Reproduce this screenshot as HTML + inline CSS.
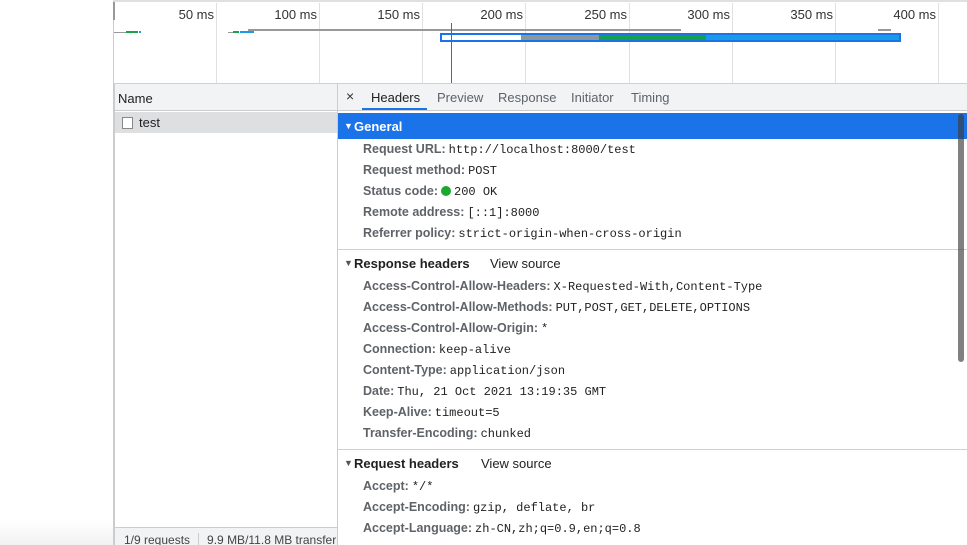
<!DOCTYPE html>
<html><head><style>
*{margin:0;padding:0;box-sizing:border-box}
body{width:967px;height:545px;overflow:hidden;background:#fff;font-family:"Liberation Sans",sans-serif;position:relative;color:#202124}
.a{position:absolute}
.gl{position:absolute;top:3px;height:80px;width:1px;background:#e0e0e0}
.tl{position:absolute;top:7px;font-size:13px;color:#333;text-align:right;width:80px}
.lab{position:absolute;left:363px;font-size:12.5px;color:#5f6368;font-weight:bold;white-space:nowrap}
.lab span{font-family:"Liberation Mono",monospace;font-weight:normal;color:#222;font-size:12px;margin-left:3px}
.sec{position:absolute;left:338px;width:629px;height:26px;font-size:13px;font-weight:bold;color:#202124}
.sec i{font-style:normal;font-size:9px;position:absolute;left:6px;top:8px;color:#555}
.sec b{position:absolute;left:16px;top:6px}
.sec u{text-decoration:none;font-weight:normal;position:absolute;top:6px;color:#202124}
.tab{position:absolute;top:90px;font-size:13px;color:#5f6368}
</style></head><body>
<div class="a" style="left:113px;top:0;width:854px;height:84px;border-top:2px solid #e0e0e0;border-left:1px solid #ccc;border-bottom:1px solid #d0d0d0"></div>
<div class="a" style="left:113px;top:2px;width:2px;height:18px;background:#999"></div>
<div class="gl" style="left:216px"></div><div class="gl" style="left:319px"></div><div class="gl" style="left:422px"></div><div class="gl" style="left:525px"></div><div class="gl" style="left:629px"></div><div class="gl" style="left:732px"></div><div class="gl" style="left:835px"></div><div class="gl" style="left:938px"></div>
<div class="tl" style="left:134px">50 ms</div><div class="tl" style="left:237px">100 ms</div><div class="tl" style="left:340px">150 ms</div><div class="tl" style="left:443px">200 ms</div><div class="tl" style="left:547px">250 ms</div><div class="tl" style="left:650px">300 ms</div><div class="tl" style="left:753px">350 ms</div><div class="tl" style="left:856px">400 ms</div>
<div class="a" style="left:114px;top:32px;width:12px;height:1px;background:#999"></div>
<div class="a" style="left:126px;top:31px;width:12px;height:2px;background:#1aa34a"></div>
<div class="a" style="left:139px;top:31px;width:2px;height:2px;background:#1a9be8"></div>
<div class="a" style="left:228px;top:32px;width:8px;height:1px;background:#999"></div>
<div class="a" style="left:233px;top:31px;width:6px;height:2px;background:#1aa34a"></div>
<div class="a" style="left:240px;top:31px;width:14px;height:2px;background:#1a9be8"></div>
<div class="a" style="left:248px;top:29px;width:433px;height:2px;background:#999"></div>
<div class="a" style="left:878px;top:29px;width:13px;height:2px;background:#999"></div>
<div class="a" style="left:440px;top:33px;width:461px;height:9px;background:#1a9be8;border:2px solid #1a73e8"></div>
<div class="a" style="left:442px;top:35px;width:79px;height:5px;background:#fff"></div>
<div class="a" style="left:521px;top:35px;width:78px;height:5px;background:#8a9a9a"></div>
<div class="a" style="left:599px;top:35px;width:107px;height:5px;background:#13a050"></div>
<div class="a" style="left:451px;top:23px;width:1px;height:60px;background:#1a73e8"></div>
<div class="a" style="left:113px;top:84px;width:225px;height:461px;border-left:2px solid #ccc;border-right:1px solid #ccc"></div>
<div class="a" style="left:115px;top:84px;width:222px;height:27px;background:#f1f3f4;border-bottom:1px solid #ccc;font-size:13px;padding:7px 0 0 3px">Name</div>
<div class="a" style="left:115px;top:112px;width:222px;height:21px;background:#dedfe0;font-size:13px;padding:3px 0 0 24px">test</div>
<div class="a" style="left:122px;top:117px;width:11px;height:12px;border:1px solid #888;background:#fff"></div>
<div class="a" style="left:115px;top:527px;width:222px;height:18px;background:#f1f3f4;border-top:1px solid #ccc;font-size:12px;color:#444;padding:5px 0 0 9px;white-space:nowrap;overflow:hidden">1/9 requests<span style="display:inline-block;width:1px;height:14px;background:#ccc;margin:0 8px -3px"></span>9.9 MB/11.8 MB transferred</div>
<div class="a" style="left:0;top:520px;width:113px;height:25px;background:linear-gradient(#fff,#f2f2f2)"></div>
<div class="a" style="left:338px;top:84px;width:629px;height:27px;background:#f1f3f4;border-bottom:1px solid #ccc"></div>
<div class="tab" style="left:346px;color:#333;font-size:14px;top:88px">×</div>
<div class="tab" style="left:371px;color:#202124">Headers</div>
<div class="a" style="left:362px;top:108px;width:65px;height:2px;background:#1a73e8"></div>
<div class="tab" style="left:437px">Preview</div>
<div class="tab" style="left:498px">Response</div>
<div class="tab" style="left:571px">Initiator</div>
<div class="tab" style="left:631px">Timing</div>
<div class="sec" style="top:113px;background:#1a73e8;color:#fff"><i style="color:#fff">▼</i><b>General</b></div>
<div class="lab" style="top:142px">Request URL:<span>http://localhost:8000/test</span></div>
<div class="lab" style="top:163px">Request method:<span>POST</span></div>
<div class="lab" style="top:184px">Status code:<span><b style="display:inline-block;width:10px;height:10px;border-radius:50%;background:#1aa830;margin-right:3px;vertical-align:-1px"></b>200 OK</span></div>
<div class="lab" style="top:205px">Remote address:<span>[::1]:8000</span></div>
<div class="lab" style="top:226px">Referrer policy:<span>strict-origin-when-cross-origin</span></div>
<div class="a" style="left:338px;top:249px;width:629px;height:1px;background:#d0d0d0"></div>
<div class="sec" style="top:250px"><i>▼</i><b>Response headers</b><u style="left:152px">View source</u></div>
<div class="lab" style="top:279px">Access-Control-Allow-Headers:<span>X-Requested-With,Content-Type</span></div>
<div class="lab" style="top:300px">Access-Control-Allow-Methods:<span>PUT,POST,GET,DELETE,OPTIONS</span></div>
<div class="lab" style="top:321px">Access-Control-Allow-Origin:<span>*</span></div>
<div class="lab" style="top:342px">Connection:<span>keep-alive</span></div>
<div class="lab" style="top:363px">Content-Type:<span>application/json</span></div>
<div class="lab" style="top:384px">Date:<span>Thu, 21 Oct 2021 13:19:35 GMT</span></div>
<div class="lab" style="top:405px">Keep-Alive:<span>timeout=5</span></div>
<div class="lab" style="top:426px">Transfer-Encoding:<span>chunked</span></div>
<div class="a" style="left:338px;top:449px;width:629px;height:1px;background:#d0d0d0"></div>
<div class="sec" style="top:450px"><i>▼</i><b>Request headers</b><u style="left:143px">View source</u></div>
<div class="lab" style="top:479px">Accept:<span>*/*</span></div>
<div class="lab" style="top:500px">Accept-Encoding:<span>gzip, deflate, br</span></div>
<div class="lab" style="top:521px">Accept-Language:<span>zh-CN,zh;q=0.9,en;q=0.8</span></div>
<div class="a" style="left:958px;top:114px;width:6px;height:248px;border-radius:3px;background:rgba(60,60,60,.65)"></div>
</body></html>
